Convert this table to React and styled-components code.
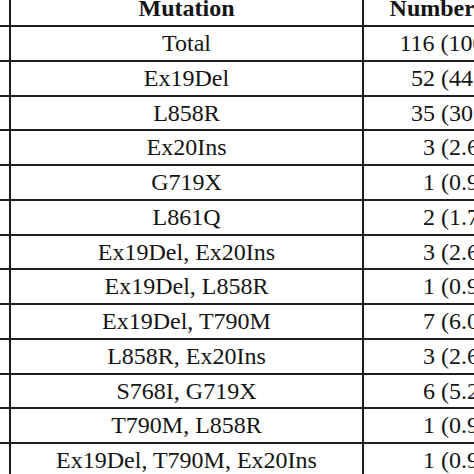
import React from "react";
import styled, { createGlobalStyle } from "styled-components";

const GlobalStyle = createGlobalStyle`
  html, body {
    margin: 0;
    padding: 0;
    background: #ffffff;
    overflow: hidden;
  }
  body {
    width: 474px;
    height: 474px;
  }
`;

const Page = styled.div`
  width: 474px;
  height: 474px;
  overflow: hidden;
  background: #ffffff;
`;

const Table = styled.div`
  margin-top: -9.75px;
  margin-left: -91px;
  width: 650px;
  font-family: "Liberation Serif", "Times New Roman", serif;
  font-size: 24px;
  color: #141414;
`;

const Row = styled.div`
  display: grid;
  grid-template-columns: 100px 353px 184px;
  height: 34.75px;
  box-sizing: border-box;
  border-top: 2px solid #1e1e1e;
`;

const Cell = styled.div`
  box-sizing: border-box;
  border-left: ${(p) => (p.$first ? "none" : "2px solid #1e1e1e")};
  text-align: center;
  line-height: 32.75px;
  white-space: nowrap;
  overflow: hidden;
  font-weight: ${(p) => (p.$head ? 700 : 400)};
`;

const rows = [
  ["Total", "116 (100.0)"],
  ["Ex19Del", "52 (44.8)"],
  ["L858R", "35 (30.2)"],
  ["Ex20Ins", "3 (2.6)"],
  ["G719X", "1 (0.9)"],
  ["L861Q", "2 (1.7)"],
  ["Ex19Del, Ex20Ins", "3 (2.6)"],
  ["Ex19Del, L858R", "1 (0.9)"],
  ["Ex19Del, T790M", "7 (6.0)"],
  ["L858R, Ex20Ins", "3 (2.6)"],
  ["S768I, G719X", "6 (5.2)"],
  ["T790M, L858R", "1 (0.9)"],
  ["Ex19Del, T790M, Ex20Ins", "1 (0.9)"],
];

export default function App() {
  return (
    <Page>
      <GlobalStyle />
      <Table>
        <Row>
          <Cell $first $head />
          <Cell $head>Mutation</Cell>
          <Cell $head>Number (%)</Cell>
        </Row>
        {rows.map(([mutation, number]) => (
          <Row key={mutation}>
            <Cell $first />
            <Cell>{mutation}</Cell>
            <Cell>{number}</Cell>
          </Row>
        ))}
      </Table>
    </Page>
  );
}
